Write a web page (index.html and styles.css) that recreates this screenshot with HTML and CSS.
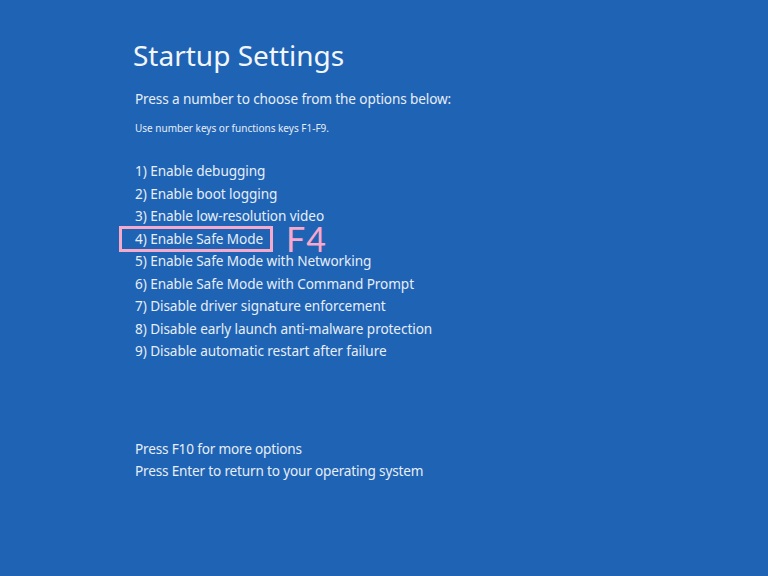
FILE: index.html
```html
<!DOCTYPE html>
<html>
<head>
<meta charset="utf-8">
<link rel="stylesheet" href="styles.css">
</head>
<body>
<main class="screen">
  <h1 class="title">Startup Settings</h1>
  <p class="lead">Press a number to choose from the options below:</p>
  <p class="hint">Use number keys or functions keys F1-F9.</p>
  <ul class="options">
    <li>1) Enable debugging</li>
    <li>2) Enable boot logging</li>
    <li>3) Enable low-resolution video</li>
    <li class="marked"><span class="boxed">4) Enable Safe Mode</span><span class="note">F4</span></li>
    <li>5) Enable Safe Mode with Networking</li>
    <li>6) Enable Safe Mode with Command Prompt</li>
    <li>7) Disable driver signature enforcement</li>
    <li>8) Disable early launch anti-malware protection</li>
    <li>9) Disable automatic restart after failure</li>
  </ul>
  <ul class="footer">
    <li>Press F10 for more options</li>
    <li>Press Enter to return to your operating system</li>
  </ul>
</main>
</body>
</html>
```
FILE: styles.css
```css
html, body {
  margin: 0;
  padding: 0;
  background: #1f63b4;
}
.screen {
  width: 768px;
  height: 576px;
  box-sizing: border-box;
  padding: 36px 0 0 133px;
  color: #e6eef8;
  font-family: "Noto Sans", "Open Sans", sans-serif;
  overflow: hidden;
}
.title {
  margin: 0;
  font-size: 28px;
  font-weight: 400;
  line-height: 38px;
  color: #f2f6fb;
}
.lead {
  margin: 15px 0 0 2px;
  font-size: 13.6px;
  letter-spacing: -0.12px;
  line-height: 20px;
}
.hint {
  margin: 12px 0 0 2px;
  font-size: 10px;
  line-height: 14px;
}
.options, .footer {
  list-style: none;
  margin: 25px 0 0 2px;
  padding: 0;
  font-size: 13.6px;
  letter-spacing: -0.08px;
}
.options li, .footer li {
  height: 22.5px;
  line-height: 22.5px;
}
.footer li {
  letter-spacing: -0.18px;
}
.marked {
  display: flex;
  align-items: center;
  gap: 13px;
}
.boxed {
  display: inline-block;
  margin-left: -16px;
  padding: 0 7px 0 13px;
  height: 20px;
  line-height: 20px;
  border: 3px solid #f5a9cb;
}
.note {
  color: #f7a8cc;
  font-family: "Lato", sans-serif;
  font-weight: 400;
  font-size: 34px;
  line-height: 22px;
  letter-spacing: 1px;
  margin-top: 1px;
}
.footer {
  margin-top: 75px;
}
```
